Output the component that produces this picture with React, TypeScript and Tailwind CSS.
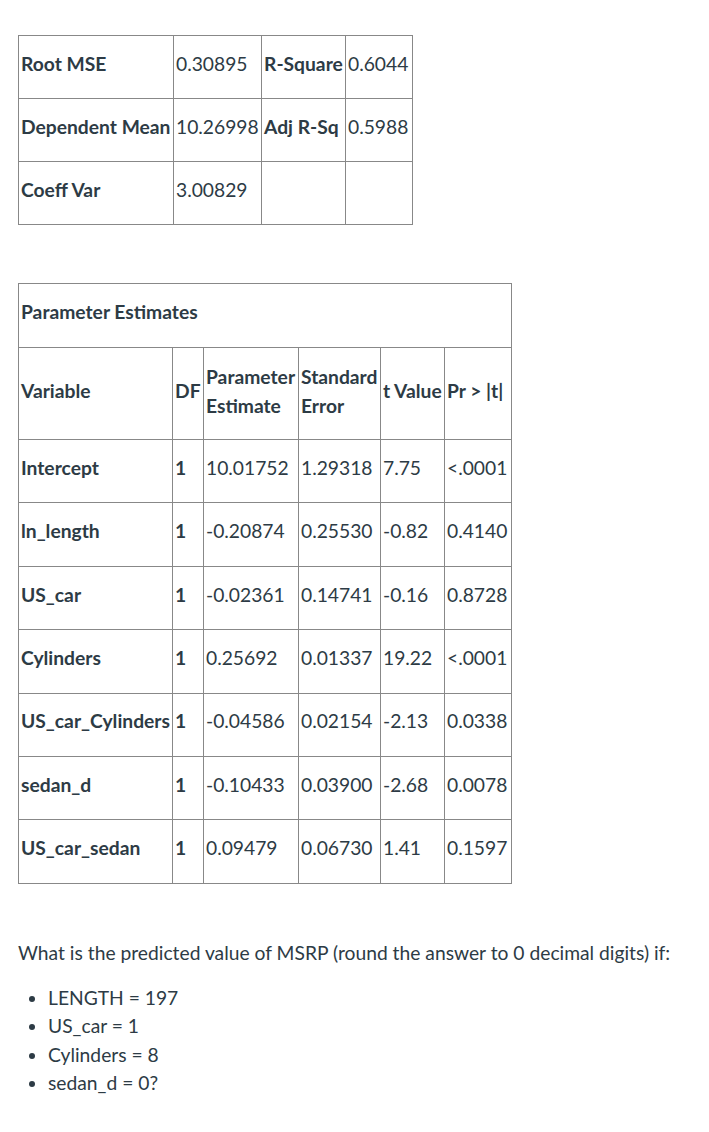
const fit = [
  ["Root MSE", "0.30895", "R-Square", "0.6044"],
  ["Dependent Mean", "10.26998", "Adj R-Sq", "0.5988"],
  ["Coeff Var", "3.00829", "", ""],
];

const estimates = [
  ["Intercept", "1", "10.01752", "1.29318", "7.75", "<.0001"],
  ["ln_length", "1", "-0.20874", "0.25530", "-0.82", "0.4140"],
  ["US_car", "1", "-0.02361", "0.14741", "-0.16", "0.8728"],
  ["Cylinders", "1", "0.25692", "0.01337", "19.22", "<.0001"],
  ["US_car_Cylinders", "1", "-0.04586", "0.02154", "-2.13", "0.0338"],
  ["sedan_d", "1", "-0.10433", "0.03900", "-2.68", "0.0078"],
  ["US_car_sedan", "1", "0.09479", "0.06730", "1.41", "0.1597"],
];

const givens = ["LENGTH = 197", "US_car = 1", "Cylinders = 8", "sedan_d = 0?"];

const cell = "border border-[#888888] px-[2px] pb-[6px] align-middle text-left";

export default function App() {
  return (
    <div className="min-h-screen bg-white pl-[18px] pt-[35px] text-[19.25px] text-[#2d3b45] [font-family:Lato,'Noto_Sans',sans-serif]">
      <table className="table-fixed border-collapse w-[394px]">
        <colgroup>
          <col className="w-[155px]" />
          <col className="w-[88px]" />
          <col className="w-[84px]" />
          <col className="w-[67px]" />
        </colgroup>
        <tbody>
          {fit.map((r) => (
            <tr key={r[0]} className="h-[63px]">
              <td className={`${cell} font-bold whitespace-nowrap`}>{r[0]}</td>
              <td className={cell}>{r[1]}</td>
              <td className={`${cell} font-bold whitespace-nowrap`}>{r[2]}</td>
              <td className={cell}>{r[3]}</td>
            </tr>
          ))}
        </tbody>
      </table>

      <table className="mt-[58px] table-fixed border-collapse w-[493px]">
        <colgroup>
          <col className="w-[154px]" />
          <col className="w-[31px]" />
          <col className="w-[95px]" />
          <col className="w-[82px]" />
          <col className="w-[64px]" />
          <col className="w-[67px]" />
        </colgroup>
        <thead>
          <tr className="h-[64px]">
            <th colSpan={6} className={`${cell} font-bold`}>
              Parameter Estimates
            </th>
          </tr>
          <tr className="h-[92px] leading-[29px]">
            <th className={`${cell} font-bold`}>Variable</th>
            <th className={`${cell} font-bold`}>DF</th>
            <th className={`${cell} font-bold whitespace-nowrap`}>
              Parameter
              <br />
              Estimate
            </th>
            <th className={`${cell} font-bold whitespace-nowrap`}>
              Standard
              <br />
              Error
            </th>
            <th className={`${cell} font-bold whitespace-nowrap`}>t Value</th>
            <th className={`${cell} font-bold whitespace-nowrap`}>Pr &gt; |t|</th>
          </tr>
        </thead>
        <tbody>
          {estimates.map((r) => (
            <tr key={r[0]} className="h-[63.4px]">
              <td className={`${cell} font-bold whitespace-nowrap`}>{r[0]}</td>
              <td className={`${cell} font-bold`}>{r[1]}</td>
              <td className={`${cell} whitespace-nowrap`}>{r[2]}</td>
              <td className={`${cell} whitespace-nowrap`}>{r[3]}</td>
              <td className={`${cell} whitespace-nowrap`}>{r[4]}</td>
              <td className={`${cell} whitespace-nowrap`}>{r[5]}</td>
            </tr>
          ))}
        </tbody>
      </table>

      <p className="mt-[55px] leading-[28px]">
        What is the predicted value of MSRP (round the answer to 0 decimal digits) if:
      </p>
      <ul className="mt-[17px] list-disc pl-[30px] leading-[28.5px]">
        {givens.map((g) => (
          <li key={g}>{g}</li>
        ))}
      </ul>
    </div>
  );
}
